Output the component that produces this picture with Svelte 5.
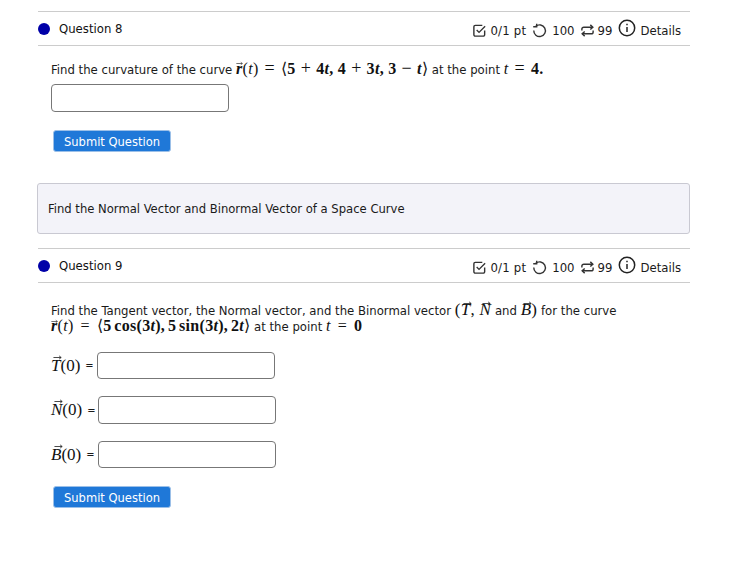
<script>
    const stats = { score: "0/1 pt", tries: "100", attempts: "99" };
</script>

{#snippet header(title)}
    <div class="q-head">
        <span class="dot"></span>
        <span class="q-title">{title}</span>
        <div class="q-meta">
            <svg class="ic" viewBox="0 0 16 16" fill="none" stroke="#333" stroke-width="1.5">
                <path d="M13.500 8v4.500a1.500 1.500 0 0 1-1.500 1.500H3.500A1.500 1.500 0 0 1 2 12.500V4a1.500 1.500 0 0 1 1.500-1.500H11" />
                <path d="M5 7.500l2.500 2.500 6.500-6.500" />
            </svg>
            <span class="score">{stats.score}</span>
            <svg class="ic undo" viewBox="0 0 16 16" fill="none" stroke="#333" stroke-width="1.500">
                <path d="M4 3.600A6.200 6.200 0 1 1 1.900 8" />
                <path d="M5 0.800v3.200H1.300" />
            </svg>
            <span class="tries">{stats.tries}</span>
            <svg class="ic swap" viewBox="0 0 16 16" fill="none" stroke="#333" stroke-width="1.500">
                <path d="M2 8V6.500a2 2 0 0 1 2-2h9.500" />
                <path d="M11 2l2.700 2.500L11 7" />
                <path d="M14 8v1.500a2 2 0 0 1-2 2H2.500" />
                <path d="M5 9l-2.700 2.500L5 14" />
            </svg>
            <span class="attempts">{stats.attempts}</span>
            <svg class="ic info" viewBox="0 0 18 18" fill="none" stroke="#222" stroke-width="1.500">
                <circle cx="9" cy="9" r="7.700" />
                <path d="M9 8v5" />
                <path d="M9 4.800v1.500" />
            </svg>
            <span class="details">Details</span>
        </div>
    </div>
{/snippet}

{#snippet vec(letter, cls = "")}
    <span class="vec {cls}"><i>{letter}</i><svg viewBox="0 0 10 5" fill="none" stroke="#222" stroke-width="0.900"><path d="M0.500 2.500h8.500M6.800 0.700l2.300 1.800-2.300 1.800" /></svg></span>
{/snippet}

<main class="page">
    <section class="question">
        {@render header("Question 8")}
        <div class="q-body">
            <p class="line">
                Find the curvature of the curve
                <span class="math">{@render vec("r", "small")}(<i>t</i>)<span class="rel">=</span>⟨<b>5</b><span class="op">+</span><b>4<i>t</i>,</b> <b>4</b><span class="op">+</span><b>3<i>t</i>,</b> <b>3</b><span class="op">−</span><b><i>t</i></b>⟩</span>
                at the point <span class="math"><i>t</i><span class="rel">=</span><b>4.</b></span>
            </p>
            <input class="answer" type="text" />
            <button class="submit">Submit Question</button>
        </div>
    </section>

    <div class="panel">Find the Normal Vector and Binormal Vector of a Space Curve</div>

    <section class="question">
        {@render header("Question 9")}
        <div class="q-body second">
            <p class="line tight">
                Find the Tangent vector, the Normal vector, and the Binormal vector
                <span class="math big">({@render vec("T")}, {@render vec("N")}</span>
                and <span class="math big">{@render vec("B")})</span> for the curve
            </p>
            <p class="line tight">
                <span class="math compact">{@render vec("r", "small")}(<i>t</i>)<span class="rel">=</span>⟨<b>5 cos(3<i>t</i>), 5 sin(3<i>t</i>), 2<i>t</i></b>⟩</span>
                at the point <span class="math"><i>t</i><span class="rel">=</span><b>0</b></span>
            </p>

            <div class="field first">
                <span class="math big label">{@render vec("T")}(0)</span>
                <span class="eq">=</span>
                <input class="answer" type="text" />
            </div>
            <div class="field wide">
                <span class="math big label">{@render vec("N")}(0)</span>
                <span class="eq">=</span>
                <input class="answer" type="text" />
            </div>
            <div class="field">
                <span class="math big label">{@render vec("B")}(0)</span>
                <span class="eq">=</span>
                <input class="answer" type="text" />
            </div>
            <button class="submit last">Submit Question</button>
        </div>
    </section>
</main>

<style>
    :global(body) {
        background: #fff;
    }

    .page {
        width: 653px;
        margin-left: 37px;
        padding-top: 11px;
        font-family: "DejaVu Sans", sans-serif;
        font-stretch: condensed;
        font-size: 13px;
        color: #1a1a1a;
    }

    .q-head {
        display: flex;
        align-items: center;
        height: 33px;
        margin-left: 1px;
        border-top: 1px solid #ccc;
        border-bottom: 1px solid #ccc;
    }

    .dot {
        width: 12px;
        height: 12px;
        border-radius: 50%;
        background: #0000a8;
    }

    .q-title {
        margin-left: 9px;
        color: #111;
    }

    .q-meta {
        display: flex;
        align-items: center;
        margin-left: auto;
        padding-right: 9px;
        padding-top: 3px;
    }

    .ic {
        flex: none;
        width: 15px;
        height: 15px;
    }

    .score {
        margin-left: 3px;
        letter-spacing: 0.2px;
    }

    .undo {
        margin-left: 6px;
    }

    .tries {
        margin-left: 5px;
    }

    .swap {
        margin-left: 5px;
    }

    .attempts {
        margin-left: 3px;
    }

    .info {
        width: 18px;
        height: 18px;
        margin: -4px 0 0 6px;
    }

    .details {
        margin-left: 4px;
    }

    .q-body {
        display: flex;
        flex-direction: column;
        align-items: flex-start;
        padding: 14px 0 0 14px;
    }

    .second {
        padding-top: 19px;
    }

    .line {
        margin: 0;
        height: 24px;
        line-height: 18px;
        white-space: nowrap;
    }

    .tight {
        height: 16px;
        line-height: 16px;
    }

    .math {
        font-family: "Liberation Serif", serif;
        font-stretch: normal;
        font-size: 16px;
        color: #111;
        letter-spacing: 0.3px;
    }

    .compact {
        word-spacing: -1.500px;
    }

    .rel,
    .op {
        font-size: 18px;
        line-height: 0;
    }

    .rel {
        margin: 0 6px;
    }

    .op {
        margin: 0 5px;
    }

    .tight .rel {
        margin: 0 7px;
        font-size: 16px;
    }

    .big {
        font-size: 17px;
    }

    .label {
        letter-spacing: 0;
    }

    .vec {
        position: relative;
        display: inline-block;
    }

    .vec svg {
        position: absolute;
        left: 25%;
        top: -1px;
        width: 9px;
        height: 5px;
    }

    .vec.small i {
        font-weight: 700;
    }

    .vec.small svg {
        left: 0;
        top: 1px;
        width: 7px;
    }

    .answer {
        box-sizing: border-box;
        display: block;
        width: 178px;
        height: 28px;
        margin: 0;
        padding: 0 4px;
        background: #fff;
        border: 1px solid #777;
        border-radius: 4px;
    }

    .submit {
        box-sizing: border-box;
        width: 118px;
        height: 22px;
        margin: 18px 0 0 2px;
        padding: 0;
        background: #1f78d8;
        border: 1px solid #9cc0e8;
        border-radius: 3px;
        font-family: "DejaVu Sans", sans-serif;
        font-stretch: condensed;
        font-size: 12.800px;
        color: #fff;
    }

    .last {
        margin-top: 18px;
    }

    .panel {
        box-sizing: border-box;
        display: flex;
        align-items: center;
        height: 51px;
        margin: 31px 0 14px;
        padding-left: 10px;
        background: #f3f3f9;
        border: 1px solid #c9c9d2;
        border-radius: 3px;
        font-size: 12.900px;
    }

    .field {
        display: flex;
        align-items: center;
        height: 27px;
        margin-top: 17px;
    }

    .field.first {
        margin-top: 18px;
    }

    .field.wide {
        height: 28px;
    }

    .field .answer {
        height: 100%;
    }

    .eq {
        margin: 0 3px 0 5px;
        font-size: 11px;
    }
</style>
